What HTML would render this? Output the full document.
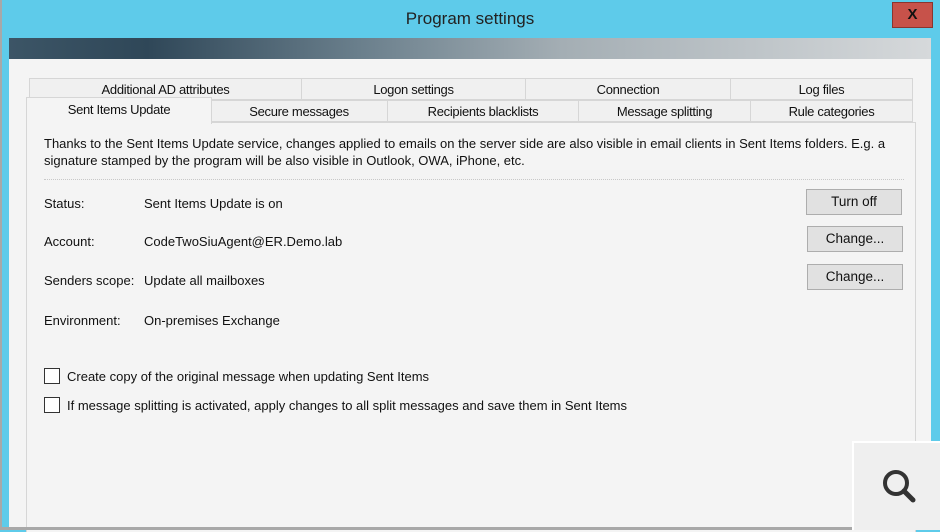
<!DOCTYPE html>
<html><head><meta charset="utf-8"><style>
*{margin:0;padding:0;box-sizing:border-box}
body{width:940px;height:530px;overflow:hidden;background:#5ecbea;font-family:"Liberation Sans",sans-serif;font-size:13px;color:#111;position:relative}
.a{position:absolute}
.title{left:0;top:0;width:940px;height:38px;text-align:center;line-height:38px;font-size:17px;color:#222}
.close{left:892px;top:2px;width:41px;height:26px;background:#c7524a;border:1px solid #8a3530;color:#111;font-weight:bold;font-size:15px;text-align:center;line-height:24px}
.grad{left:9px;top:38px;width:922px;height:21px;background:linear-gradient(90deg,#3c5566 0%,#2f4758 15%,#6a7f8c 38%,#a4aeb4 60%,#d6d9db 100%)}
.main{left:9px;top:59px;width:922px;height:471px;background:#f4f4f4}
.tab{position:absolute;height:22px;border:1px solid #d6d6d6;background:#f0f0f0;text-align:center;line-height:21px;font-size:13px;letter-spacing:-.3px}
.panel{left:26px;top:122px;width:890px;height:410px;border:1px solid #d6d6d6;border-bottom:none;background:#f4f4f4}
.btn{position:absolute;height:26px;background:#e1e1e1;border:1px solid #adadad;text-align:center;line-height:24px;font-size:13.5px}
.cb{position:absolute;width:16px;height:16px;border:1px solid #333;background:#fff}
.bot{left:0;top:527px;width:940px;height:3px;background:#a8a8a8}
</style></head><body>
<div class="a" style="left:0;top:0;width:2px;height:530px;background:#a8a8a8"></div>
<div class="a title">Program settings</div>
<div class="a close">X</div>
<div class="a grad"></div>
<div class="a main"></div>
<div class="tab" style="left:29px;top:78px;width:273px">Additional AD attributes</div>
<div class="tab" style="left:301px;top:78px;width:225px">Logon settings</div>
<div class="tab" style="left:525px;top:78px;width:206px">Connection</div>
<div class="tab" style="left:730px;top:78px;width:183px">Log files</div>
<div class="tab" style="left:210px;top:100px;width:178px">Secure messages</div>
<div class="tab" style="left:387px;top:100px;width:192px">Recipients blacklists</div>
<div class="tab" style="left:578px;top:100px;width:173px">Message splitting</div>
<div class="tab" style="left:750px;top:100px;width:163px">Rule categories</div>
<div class="a panel"></div>
<div class="tab" style="left:26px;top:97px;width:186px;height:27px;background:#f4f4f4;border-bottom:none;line-height:24px">Sent Items Update</div>
<div class="a" style="left:44px;top:135px;width:860px;line-height:17px;font-size:13px">Thanks to the Sent Items Update service, changes applied to emails on the server side are also visible in email clients in Sent Items folders. E.g. a signature stamped by the program will be also visible in Outlook, OWA, iPhone, etc.</div>
<div class="a" style="left:44px;top:179px;width:860px;border-top:1px dotted #c8c8c8"></div>
<div class="a" style="left:44px;top:196px">Status:</div><div class="a" style="left:144px;top:196px">Sent Items Update is on</div>
<div class="a" style="left:44px;top:234px">Account:</div><div class="a" style="left:144px;top:234px">CodeTwoSiuAgent@ER.Demo.lab</div>
<div class="a" style="left:44px;top:273px">Senders scope:</div><div class="a" style="left:144px;top:273px">Update all mailboxes</div>
<div class="a" style="left:44px;top:313px">Environment:</div><div class="a" style="left:144px;top:313px">On-premises Exchange</div>
<div class="btn" style="left:806px;top:189px;width:96px">Turn off</div>
<div class="btn" style="left:807px;top:226px;width:96px">Change...</div>
<div class="btn" style="left:807px;top:264px;width:96px">Change...</div>
<div class="cb" style="left:44px;top:368px"></div><div class="a" style="left:67px;top:369px">Create copy of the original message when updating Sent Items</div>
<div class="cb" style="left:44px;top:397px"></div><div class="a" style="left:67px;top:398px">If message splitting is activated, apply changes to all split messages and save them in Sent Items</div>
<div class="a bot"></div>
<div class="a" style="left:852px;top:441px;width:88px;height:89px;background:#efefef;border-left:2px solid #fff;border-top:2px solid #fff">
<svg width="88" height="88" viewBox="0 0 88 88" style="position:absolute;left:-2px;top:-2px"><circle cx="44" cy="42" r="11" fill="none" stroke="#333" stroke-width="4"/><line x1="52" y1="50" x2="61" y2="59" stroke="#333" stroke-width="5" stroke-linecap="round"/></svg>
</div>
</body></html>
